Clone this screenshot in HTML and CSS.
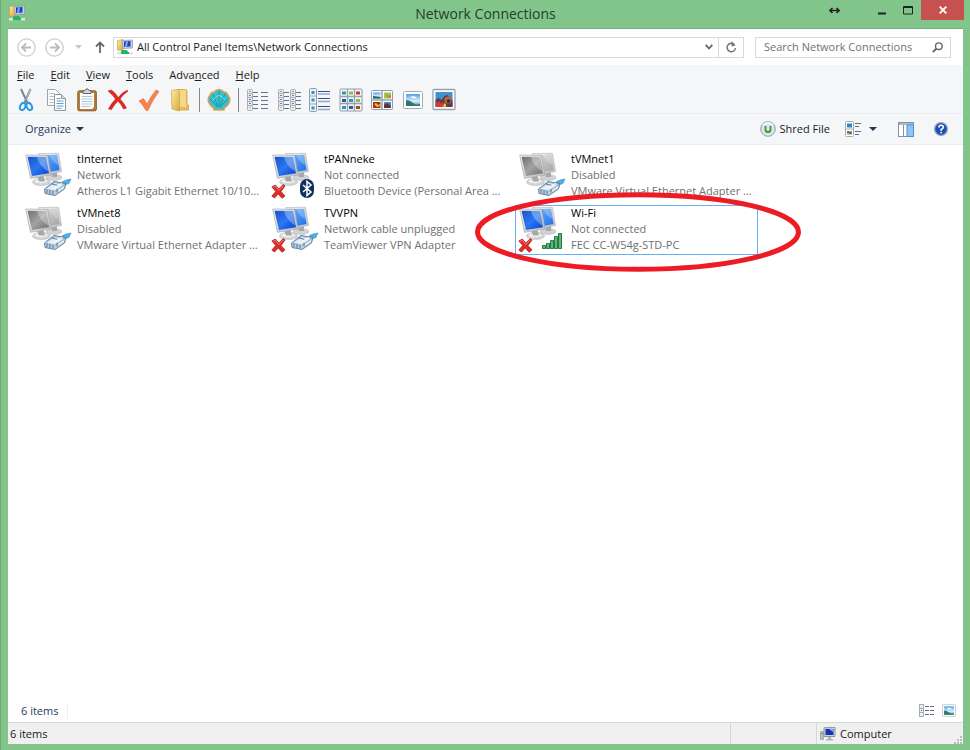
FILE: index.html
```html
<!DOCTYPE html>
<html lang="en">
<head>
<meta charset="utf-8">
<title>Network Connections</title>
<link rel="stylesheet" href="styles.css">
</head>
<body>
<svg class="defs" aria-hidden="true">
  <defs>
    <linearGradient id="blue" x1="0" y1="0" x2="1" y2="1"><stop offset="0" stop-color="#1f50c8"/><stop offset=".5" stop-color="#2a78f2"/><stop offset="1" stop-color="#0c3fd0"/></linearGradient>
    <linearGradient id="blue2" x1="0" y1="0" x2="1" y2="1"><stop offset="0" stop-color="#6fb2f7"/><stop offset="1" stop-color="#1e6ff0"/></linearGradient>
    <linearGradient id="gray" x1="0" y1="0" x2="1" y2="1"><stop offset="0" stop-color="#6f6f6f"/><stop offset=".5" stop-color="#a2a2a2"/><stop offset="1" stop-color="#707070"/></linearGradient>
    <linearGradient id="gray2" x1="0" y1="0" x2="1" y2="1"><stop offset="0" stop-color="#dadada"/><stop offset="1" stop-color="#a4a4a4"/></linearGradient>
    <linearGradient id="frame" x1="0" y1="0" x2="1" y2="1"><stop offset="0" stop-color="#f4f4f4"/><stop offset="1" stop-color="#b9bcbe"/></linearGradient>
    <linearGradient id="gold" x1="0" y1="0" x2="1" y2="1"><stop offset="0" stop-color="#fdeea4"/><stop offset="1" stop-color="#d9a93c"/></linearGradient>
    <linearGradient id="sky" x1="0" y1="0" x2="0" y2="1"><stop offset="0" stop-color="#4f9fe8"/><stop offset=".6" stop-color="#d8f0fa"/><stop offset="1" stop-color="#3c8c88"/></linearGradient>

    <symbol id="screens" viewBox="0 0 48 48">
      <ellipse cx="30" cy="26.500" rx="8" ry="3" fill="#d0d2d3" stroke="#b4b6b8" stroke-width=".5"/>
      <path d="M27 20l6-1v7h-5z" fill="#a6a8aa"/>
      <path d="M14.500 2.500L34.500 2.300 37.500 20.500 22 23.500z" fill="url(#frame)" stroke="#b4b6b8" stroke-width=".6"/>
      <path d="M16.500 4.200L33 4 35.500 19 23 21.500z" fill="var(--back)"/>
      <path d="M25 4.200L33 4 34.500 14Q29 12 25 4.200z" fill="#fff" opacity=".25"/>
      <ellipse cx="17.500" cy="31" rx="9" ry="3.600" fill="#d2d4d5" stroke="#aeb0b2" stroke-width=".5"/>
      <ellipse cx="17" cy="30.200" rx="6.500" ry="2" fill="#f3f3f3"/>
      <path d="M13.500 26l6-1 1.500 5.500h-6z" fill="#a4a8aa"/>
      <path d="M1.700 4L23.500 4.300 27 24 6.500 27.300z" fill="url(#frame)" stroke="#a6a9ab" stroke-width=".7"/>
      <path d="M3.500 5.700L22 6 25 22.300 8 25z" fill="var(--front)"/>
      <path d="M13 5.900L22 6 24.500 20.500Q15 15 13 5.900z" fill="#fff" opacity=".3"/>
    </symbol>
    <symbol id="plug" viewBox="0 0 48 48">
      <path d="M35 34Q38 29 47 28L45 32.500Q41 33 38 37z" fill="#4eb2e8" stroke="#2c87c0" stroke-width=".5"/>
      <path d="M20.500 38L30 30.500 42 32.500 40.500 38 31 44.500 21 42.500z" fill="#bcd0e2" stroke="#57799c" stroke-width=".9"/>
      <path d="M21 38L31 31.500 41 33.500 30.500 40z" fill="#e6eff7" stroke="#7b97b4" stroke-width=".6"/>
      <path d="M23 38.500v3.500M26 39v4M29 40v3.500M28 33l6 1.500M33 38v3.500" stroke="#456b93" stroke-width=".9"/>
      <path d="M30 37l8-5M34 40l6-4" stroke="#fff" stroke-width="1"/>
    </symbol>
    <symbol id="off" viewBox="0 0 48 48">
      <path d="M.8 36l3.500-2 3.500 4 4.500-4.500L14 35l-4 5.500 4 4.500-3 2.300L7.300 43 3.500 47 .8 45l4-4.500z" fill="#e02c28" stroke="#a81515" stroke-width=".7"/>
      <path d="M2.300 36.300l2-1 3.500 4.200L12.300 35" fill="none" stroke="#ff8a80" stroke-width=".8"/>
    </symbol>
    <symbol id="bluetooth" viewBox="0 0 48 48">
      <rect x="29" y="28" width="14" height="19" rx="7" fill="#10315e"/>
      <path d="M32 34l8 7-4 3.500v-14l4 3.500-8 7" fill="none" stroke="#fff" stroke-width="1.500"/>
    </symbol>
    <symbol id="bars" viewBox="0 0 48 48">
      <path d="M24.500 40.500h3v3h-3zM28.500 38.500h3v5h-3zM32.500 35.500h3v8h-3zM36.500 31.500h3v12h-3zM40.500 28.500h3v15h-3z" fill="#62b478" stroke="#237c42"/>
    </symbol>

    <symbol id="app" viewBox="0 0 16 16">
      <path d="M.5 1.500L6 .5v11L.5 11z" fill="url(#gold)" stroke="#c7a244" stroke-width=".7"/>
      <path d="M5 1.500L15.500 1v8L6 9.500z" fill="#c7d0dc" stroke="#8794a6" stroke-width=".7"/>
      <path d="M7 2.500l6.500-.5v5.500L7 8z" fill="#1c3fc4"/>
      <path d="M9 2.500l2-.2-1 5.300-2 .3z" fill="#7fb0ff"/>
      <path d="M5 11h5l1 2h4v2H1v-2h3z" fill="#24b36a"/>
      <path d="M0 13h4v2.500H0zM12 13h4v2.500h-4z" fill="#dbe6e0"/>
    </symbol>
    <symbol id="pic" viewBox="0 0 20 18">
      <rect x=".5" y=".5" width="19" height="17" rx="1" fill="#fff" stroke="#a3adb8"/>
      <rect x="3" y="3" width="14" height="12" fill="url(#sky)"/>
      <path d="M3 9q4 0 7 3t7 1v2H3z" fill="#2f766e"/>
      <path d="M7 6q4-2 7 1-3 1-7-1z" fill="#fff"/>
    </symbol>
    <symbol id="lines" viewBox="0 0 12 22">
      <rect x=".5" y=".5" width="5" height="21" rx="1" fill="#e8edf2" stroke="#a7b1bd"/>
      <path d="M1 4.500h4M1 8.500h4M1 12.500h4M1 16.500h4" stroke="#a7b1bd"/>
      <path d="M2 2.500h2" stroke="#6a9"/><path d="M2 6.500h2M2 14.500h2" stroke="#d55"/><path d="M2 10.500h2" stroke="#48c"/><path d="M2 18.500h2" stroke="#db4"/>
      <path d="M6 3.500h5M6 7.500h5M6 11.500h5M6 15.500h5M6 19.500h5" stroke="#63758a"/>
    </symbol>
  </defs>
</svg>

<div class="window">
  <header class="titlebar">
    <svg class="i16 app-icon"><use href="#app"/></svg>
    <h1>Network Connections</h1>
    <div class="controls">
      <button aria-label="Resize"><svg width="11" height="7" viewBox="0 0 11 7"><path d="M1 3.500h9M3.500 1L1 3.500 3.500 6M7.500 1L10 3.500 7.500 6" fill="none" stroke="#222" stroke-width="1.600"/></svg></button>
      <button class="min" aria-label="Minimize"><svg width="8" height="9" viewBox="0 0 8 9"><path d="M0 7.500h8" stroke="#222" stroke-width="2"/></svg></button>
      <button class="max" aria-label="Maximize"><svg width="10" height="9" viewBox="0 0 10 9"><path d="M.5 .5h9v7.500h-9zM0 1.500h10" fill="none" stroke="#222"/></svg></button>
      <button class="close" aria-label="Close"><svg width="8" height="8" viewBox="0 0 8 8"><path d="M.7 .7l6.600 6.600M7.300 .7L.7 7.300" stroke="#fff" stroke-width="1.800"/></svg></button>
    </div>
  </header>

  <main class="frame">
    <nav class="address-row">
      <button class="circle" aria-label="Back"><svg width="19" height="19" viewBox="0 0 19 19"><circle cx="9.500" cy="9.500" r="8.700" fill="none" stroke="#ccc" stroke-width="1.300"/><path d="M14 9.500H5.500M9 5.500l-4 4 4 4" fill="none" stroke="#bcbcbc" stroke-width="1.800"/></svg></button>
      <button class="circle" aria-label="Forward"><svg width="19" height="19" viewBox="0 0 19 19"><circle cx="9.500" cy="9.500" r="8.700" fill="none" stroke="#ccc" stroke-width="1.300"/><path d="M5 9.500h8.500M10 5.500l4 4-4 4" fill="none" stroke="#bcbcbc" stroke-width="1.800"/></svg></button>
      <button class="recent" aria-label="Recent locations"><svg width="7" height="4" viewBox="0 0 7 4"><path d="M0 0h7L3.500 4z" fill="#c8c8c8"/></svg></button>
      <button class="up" aria-label="Up"><svg width="10" height="12" viewBox="0 0 10 12"><path d="M5 12V1.500M1 5.500l4-4 4 4" fill="none" stroke="#666" stroke-width="1.800"/></svg></button>
      <div class="address">
        <svg class="i16"><use href="#app"/></svg>
        <input aria-label="Address" value="All Control Panel Items\Network Connections">
        <button aria-label="Previous locations"><svg width="8" height="6" viewBox="0 0 8 6"><path d="M.7 .8L4 4.500 7.300 .8" fill="none" stroke="#666" stroke-width="1.800"/></svg></button>
        <button class="refresh" aria-label="Refresh"><svg width="11" height="12" viewBox="0 0 11 12"><path d="M8.500 3.800A4.200 4.200 0 1 0 9.500 7" fill="none" stroke="#777" stroke-width="1.500"/><path d="M5.500 0v5.500L9.500 4.500z" fill="#777"/></svg></button>
      </div>
      <div class="search">
        <input aria-label="Search" placeholder="Search Network Connections">
        <button aria-label="Start search"><svg width="11" height="11" viewBox="0 0 11 11"><circle cx="6.800" cy="4.200" r="3.300" fill="none" stroke="#666" stroke-width="1.400"/><path d="M4.500 6.500L.8 10.200" stroke="#666" stroke-width="1.800"/></svg></button>
      </div>
    </nav>

    <nav class="menu">
      <a href="#"><u>F</u>ile</a><a href="#"><u>E</u>dit</a><a href="#"><u>V</u>iew</a><a href="#"><u>T</u>ools</a><a href="#">Adva<u>n</u>ced</a><a href="#"><u>H</u>elp</a>
    </nav>

    <div class="toolbar">
      <button aria-label="Cut"><svg viewBox="0 0 24 24"><path d="M8 1l6.500 14M17.500 1L11.500 15" stroke="#7c8794" stroke-width="2"/><path d="M17.500 1L13 11.500" stroke="#c6ccd2" stroke-width=".8"/><ellipse cx="9.700" cy="18.500" rx="2.500" ry="3.700" transform="rotate(25 9.700 18.500)" fill="none" stroke="#289ae0" stroke-width="2"/><ellipse cx="16.300" cy="18.500" rx="2.500" ry="3.700" transform="rotate(-25 16.300 18.500)" fill="none" stroke="#289ae0" stroke-width="2"/></svg></button>
      <button aria-label="Copy"><svg viewBox="0 0 24 24"><path d="M3.500 1.500h8l4 4v12h-12z" fill="#fafafa" stroke="#9ea4aa"/><path d="M5.500 5.500h5M5.500 8.500h7M5.500 11.500h5M5.500 14.500h4" stroke="#b7bcc2"/><path d="M10.500 6.500h7l4 4v12h-11z" fill="#fff" stroke="#8e979f"/><path d="M17.500 6.500v4h4" fill="#d9dde1" stroke="#8e979f"/><path d="M12.500 10.500h4M12.500 13h7M12.500 15.500h7M12.500 18h7M12.500 20.300h5" stroke="#5f9fd0"/></svg></button>
      <button aria-label="Paste"><svg viewBox="0 0 24 24"><rect x="2.800" y="2.800" width="18.500" height="20" rx="1.500" fill="#b47c3d" stroke="#8c5926"/><path d="M5 5h14v14l-2 2H5z" fill="#fff"/><path d="M6.500 8.500h11M6.500 11h11M6.500 13.500h11M6.500 16h11M6.500 18.500h9" stroke="#a9c3da"/><path d="M8 2.500h2l1-1.500h2l1 1.500h2v3H8z" fill="#d5d7d9" stroke="#65696d"/></svg></button>
      <button aria-label="Delete"><svg viewBox="0 0 24 24"><path d="M2 3l3.500-1q4 3 7 7.500Q16 4 21.500 2.300l.5.700q-5 3.500-8 8 4 4 6.500 9l-3 1q-2.500-5-5.500-8-4 4-6.500 8.500L2.500 21q3-6 7-10Q6 6 2 3z" fill="#e02820" stroke="#b31813" stroke-width=".5"/></svg></button>
      <button aria-label="Properties"><svg viewBox="0 0 24 24"><path d="M2 13l4.500-2.500 3.500 5.500Q14 8 19 2l3 1.500Q16 11 11 22.500H9Q6 17 2 13z" fill="#f4824a" stroke="#e8703a" stroke-width=".6"/></svg></button>
      <button aria-label="New folder"><svg viewBox="0 0 24 24"><path d="M9 1.500h9l1 1V16l1.500 1v5L9 22z" fill="#e9bd57" stroke="#d09c34" stroke-width=".7"/><path d="M10 2h8v17h-8z" fill="#f4d987"/><path d="M3.500 2.500L9.500 1.500 11.500 3.500V23L4 21z" fill="url(#gold)" stroke="#cda241" stroke-width=".7"/></svg></button>
      <span class="sep"></span>
      <button aria-label="Shell"><svg viewBox="0 0 24 24"><path d="M6.500 20Q2 17 1 12q0-3 2-5 1-3 4-3 2-2.500 5-2.500T17 4q3 0 4 3 2 2 2 5-1 5-5.500 8l-.5 2H7z" fill="#35c2cc" stroke="#f29a49" stroke-width="1.300"/><path d="M11 19L3 11M11 19L6 6M12 19V3M13 19l5-13M13 19l8-8" stroke="#1b93a6" stroke-width=".9"/><path d="M6 12Q12 3 18 12" fill="none" stroke="#78dee0"/></svg></button>
      <span class="sep"></span>
      <button aria-label="List"><svg viewBox="0 0 24 24"><use href="#lines" x="1" y="1" width="12" height="22"/><path d="M15 4.500h7M15 8.500h7M15 12.500h7M15 16.500h7M15 20.500h7" stroke="#63758a"/></svg></button>
      <button aria-label="Columns"><svg viewBox="0 0 24 24"><use href="#lines" x="1" y="1" width="12" height="22"/><use href="#lines" x="13" y="1" width="12" height="22"/></svg></button>
      <button aria-label="Tiles"><svg viewBox="0 0 24 24"><rect x="1.500" y=".5" width="7" height="23" rx="1" fill="#edf1f5" stroke="#8e9cac"/><path d="M2 8h6M2 16h6" stroke="#9eabb9"/><path d="M3.500 3h3v3h-3zM3.500 10.500h3v3h-3zM3.500 18.500h3v3h-3z" fill="#3e93b8"/><path d="M10 3.500h12M10 10.500h12M10 18.500h12" stroke="#41546f"/><path d="M10 6h12M10 13.500h12M10 21.500h12" stroke="#8aa8dc" stroke-width="1.500"/></svg></button>
      <button aria-label="Small icons"><svg viewBox="0 0 24 24"><rect x="1" y="1" width="22" height="22" rx="1" fill="#f4f6f8" stroke="#8e9cac"/><path d="M8.500 1v22M15.500 1v22M1 8.500h22M1 15.500h22" stroke="#97a4b3" stroke-width="1.300"/><path d="M3 3.500h4v3H3zM10 11h4v3h-4zM3 18h4v3H3z" fill="#2f9aa2"/><path d="M10 3.500h4v3h-4zM17 11h4v3h-4z" fill="#8cbf4a"/><path d="M17 3.500h4v3h-4zM17 18h4v3h-4z" fill="#ba3e24"/><path d="M3 11h4v3H3zM10 18h4v3h-4z" fill="#31598e"/></svg></button>
      <button aria-label="Medium icons"><svg viewBox="0 0 24 24"><rect x="1.500" y="2.500" width="21" height="19" rx="1" fill="#fff" stroke="#8e9cac"/><path d="M12 2v20M1 12h22" stroke="#97a4b3" stroke-width="1.500"/><path d="M3 4.500h7.500v6H3z" fill="url(#sky)"/><path d="M3 8l7.500 1v1.500H3z" fill="#216d5b"/><path d="M14 4.500h7v6h-7z" fill="#8fcf55"/><path d="M15 5l4 3 2-3v5h-3z" fill="#e77a2e"/><path d="M3 14h7.500v6H3z" fill="#a33118"/><path d="M4 16l2-1 2 2 2-1v2l-3 1z" fill="#f3bb22"/><path d="M14 14h7v6h-7z" fill="#4d88c8"/><path d="M14 17l3-2 4 3v2h-7z" fill="#63302c"/></svg></button>
      <button aria-label="Large icons"><svg viewBox="0 0 24 24"><use href="#pic" x="2" y="3" width="20" height="18"/></svg></button>
      <button aria-label="Extra large icons"><svg viewBox="0 0 24 24"><rect x="1" y="1.500" width="22" height="20" rx="1" fill="#fff" stroke="#98a3af" stroke-width="1.300"/><path d="M3.500 4h17v15h-17z" fill="#3f91cf"/><path d="M3.500 12l3-2 3 2 3-4 3-1 3 3 2 2v7h-17z" fill="#663744"/><circle cx="16" cy="12" r="3.500" fill="#b96a36"/><circle cx="16.500" cy="13" r="1.800" fill="#252c45"/><path d="M4 13l2 2 1-3 2 4 2-3v6H4z" fill="#cf3d37"/><path d="M12 15l2 1v3h-3z" fill="#ecc04a"/></svg></button>
    </div>

    <div class="commands">
      <button class="organize">Organize <svg width="8" height="4" viewBox="0 0 8 4"><path d="M0 0h8L4 4z" fill="#1e395b"/></svg></button>
      <button class="shred"><svg width="16" height="16" viewBox="0 0 16 16"><circle cx="8" cy="8" r="7.300" fill="#dce5ec" stroke="#8ea0b1"/><path d="M3 4q5-4 10 0" fill="none" stroke="#fff" stroke-width="1.500"/><path d="M5.500 5V9q0 2 2.500 2t2.500-2V5" fill="none" stroke="#3a9a27" stroke-width="1.800"/></svg>Shred File</button>
      <button class="views" aria-label="Change view"><svg width="16" height="16" viewBox="0 0 16 16"><rect x=".5" y=".5" width="8" height="15" rx="1" fill="#fff" stroke="#a3adb8"/><path d="M1 8h7" stroke="#a3adb8"/><path d="M2 2.500h5v4H2z" fill="#3589b5"/><path d="M2 10h5v3.500H2z" fill="#7eb84f"/><path d="M2 10h2v2H2z" fill="#d6482c"/><path d="M4.500 11h2v2h-2z" fill="#365fc8"/><path d="M10 2.500h6M10 5.500h4M10 10.500h6M10 13.500h4" stroke="#5a6e88"/></svg></button>
      <button class="view-more" aria-label="More views"><svg width="8" height="4" viewBox="0 0 8 4"><path d="M0 0h8L4 4z" fill="#1e395b"/></svg></button>
      <button class="pane" aria-label="Preview pane"><svg width="16" height="15" viewBox="0 0 16 15"><rect x=".5" y=".5" width="15" height="14" fill="#fff" stroke="#8693a1"/><path d="M1 2h14" stroke="#aeb8c2" stroke-width="2"/><path d="M5.500 3v11" stroke="#8693a1"/><path d="M9 3h6.500v11.500H9z" fill="#8fc5f8" stroke="#4c94d8"/></svg></button>
      <button class="help" aria-label="Help"><svg width="14" height="14" viewBox="0 0 14 14"><circle cx="7" cy="7" r="6.300" fill="#1c50b8" stroke="#8a9bb8" stroke-width="1.300"/><path d="M4.800 5.500Q5 3.300 7.200 3.300T9.300 5.300Q9.300 6.300 7.200 7.500V8.700M7.200 9.700v1.600" fill="none" stroke="#fff" stroke-width="1.600"/></svg></button>
    </div>

    <section class="items" aria-label="Connections">
      <button class="item">
        <svg class="net" viewBox="0 0 48 48"><use href="#screens"/><use href="#plug"/></svg>
        <span class="text"><b>tInternet</b><span>Network</span><span>Atheros L1 Gigabit Ethernet 10/10...</span></span>
      </button>
      <button class="item">
        <svg class="net" viewBox="0 0 48 48"><use href="#screens"/><use href="#bluetooth"/><use href="#off"/></svg>
        <span class="text"><b>tPANneke</b><span>Not connected</span><span>Bluetooth Device (Personal Area ...</span></span>
      </button>
      <button class="item disabled">
        <svg class="net" viewBox="0 0 48 48"><use href="#screens"/><use href="#plug"/></svg>
        <span class="text"><b>tVMnet1</b><span>Disabled</span><span>VMware Virtual Ethernet Adapter ...</span></span>
      </button>
      <button class="item disabled">
        <svg class="net" viewBox="0 0 48 48"><use href="#screens"/><use href="#plug"/></svg>
        <span class="text"><b>tVMnet8</b><span>Disabled</span><span>VMware Virtual Ethernet Adapter ...</span></span>
      </button>
      <button class="item">
        <svg class="net" viewBox="0 0 48 48"><use href="#screens"/><use href="#plug"/><use href="#off"/></svg>
        <span class="text"><b>TVVPN</b><span>Network cable unplugged</span><span>TeamViewer VPN Adapter</span></span>
      </button>
      <button class="item selected">
        <svg class="net" viewBox="0 0 48 48"><use href="#screens"/><use href="#bars"/><use href="#off"/></svg>
        <span class="text"><b>Wi-Fi</b><span>Not connected</span><span>FEC CC-W54g-STD-PC</span></span>
        <svg class="ring" viewBox="0 0 326 80"><ellipse cx="163" cy="40" rx="160.500" ry="37.300" fill="none" stroke="#ed1c24" stroke-width="5"/></svg>
      </button>
    </section>

    <div class="details">
      <span class="count">6 items</span>
      <button aria-label="Details view"><svg width="16" height="13" viewBox="0 0 16 13"><rect x=".5" y=".5" width="4" height="12" fill="#edf1f5" stroke="#a3adb8"/><path d="M1 4.500h3M1 8.500h3" stroke="#a3adb8"/><path d="M2 6.500h1" stroke="#d33"/><path d="M6 2.500h4M11 2.500h4M6 6.500h4M11 6.500h4M6 10.500h4M11 10.500h4" stroke="#5e7088"/></svg></button>
      <button aria-label="Thumbnail view"><svg width="14" height="13" viewBox="0 0 20 18"><use href="#pic"/></svg></button>
    </div>

    <footer class="status">
      <span class="total">6 items</span>
      <span class="blank"></span>
      <span class="place"><svg width="16" height="14" viewBox="0 0 16 14"><path d="M.5 4.500h3v8h-3z" fill="#b9bdc2" stroke="#aaa"/><path d="M1 6.500h2" stroke="#2fae3b"/><path d="M4 .8l11-.3v9H4z" fill="#d0d3d8" stroke="#8d949d"/><path d="M5.500 2h8v6h-8z" fill="#1730b8"/><path d="M9 2h4.500v3.500z" fill="#78a9ff"/><path d="M8 10h3v2h2v1.500H6V12h2z" fill="#aeb3b9"/></svg>Computer</span>
      <svg class="grip" width="8" height="8" viewBox="0 0 8 8"><path d="M6 0h2v2H6zM3 3h2v2H3zM6 3h2v2H6zM0 6h2v2H0zM3 6h2v2H3zM6 6h2v2H6z" fill="#bbb"/></svg>
    </footer>
  </main>
</div>
</body>
</html>
```

FILE: styles.css
```css
* {
  box-sizing: border-box;
}

body {
  margin: 0;
  font: 11px/16px "Open Sans", "Noto Sans", sans-serif;
  color: #1a1a1a;
}

button,
input {
  margin: 0;
  padding: 0;
  border: 0;
  background: none;
  font: inherit;
  color: inherit;
}

button {
  display: flex;
  align-items: center;
  justify-content: center;
}

svg {
  display: block;
  flex: none;
}

.defs {
  position: absolute;
  width: 0;
  height: 0;
}

.i16 {
  width: 16px;
  height: 16px;
}

.window {
  display: flex;
  flex-direction: column;
  min-height: 100vh;
  padding: 0 7px 6px;
  background: #82c58b;
  border-left: 1px solid #6ca775;
}

.titlebar {
  display: grid;
  grid-template-columns: 1fr auto 1fr;
  height: 29px;
  border-bottom: 1px solid #6fb078;
}

.app-icon {
  margin: 5px 0 0 1px;
}

.titlebar h1 {
  margin: 0;
  font-size: 14px;
  line-height: 28px;
  font-weight: 400;
  color: #24402a;
}

.controls {
  display: flex;
  justify-content: flex-end;
  align-items: flex-start;
  margin-right: -1px;
}

.controls button {
  height: 20px;
  width: 26px;
}

.controls .min {
  margin-left: 22px;
}

.controls .close {
  width: 43px;
  background: #c75050;
}

.frame {
  display: flex;
  flex-direction: column;
  flex: 1;
  background: #fff;
}

.address-row {
  display: flex;
  align-items: center;
  height: 36px;
  padding: 0 12px 0 9px;
}

.circle {
  width: 19px;
  margin-right: 9px;
}

.recent {
  width: 10px;
}

.up {
  width: 20px;
  margin: 0 3px 0 7px;
}

.address,
.search {
  display: flex;
  align-items: center;
  height: 21px;
  border: 1px solid #d9d9d9;
}

.address {
  flex: 1;
  padding-left: 3px;
  margin-right: 11px;
}

.address input {
  flex: 1;
  min-width: 0;
  padding-left: 4px;
}

.address button {
  width: 18px;
  height: 19px;
}

.address .refresh {
  width: 25px;
  border-left: 1px solid #d9d9d9;
}

.search {
  width: 196px;
}

.search input {
  flex: 1;
  min-width: 0;
  padding-left: 8px;
}

.search input::placeholder {
  color: #707070;
  opacity: 1;
}

.search button {
  width: 26px;
}

.menu {
  display: flex;
  gap: 16px;
  height: 21px;
  padding: 2px 9px 0;
  background: #f5f6f8;
}

.menu a {
  color: #1a1a1a;
  text-decoration: none;
}

.toolbar {
  display: flex;
  align-items: center;
  gap: 7px;
  height: 28px;
  padding: 0 5px;
  background: #f5f6f8;
  border-bottom: 1px solid #e9ebee;
}

.toolbar button,
.toolbar button svg {
  width: 24px;
  height: 24px;
}

.sep {
  width: 1px;
  height: 24px;
  background: #858585;
}

.commands {
  display: flex;
  align-items: center;
  height: 31px;
  padding: 0 15px 0 17px;
  background: #f5f6f8;
  border-bottom: 1px solid #e9ebee;
}

.organize {
  gap: 5px;
  margin-right: auto;
  color: #1e395b;
}

.shred {
  gap: 4px;
}

.views {
  margin-left: 15px;
}

.view-more {
  margin-left: 8px;
}

.pane {
  margin-left: 21px;
}

.help {
  margin-left: 20px;
}

.items {
  display: grid;
  grid-template-columns: repeat(auto-fill, 243px);
  grid-auto-rows: 50px;
  gap: 4px;
  flex: 1;
  align-content: start;
  padding: 6px 100px 6px 13px;
}

.item {
  position: relative;
  align-items: flex-start;
  justify-content: flex-start;
  gap: 5px;
  padding-left: 3px;
  text-align: left;
  white-space: nowrap;
  --front: url(#blue);
  --back: url(#blue2);
}

.disabled {
  --front: url(#gray);
  --back: url(#gray2);
}

.selected {
  outline: 1px solid #66b0f0;
  outline-offset: -1px;
}

.net {
  width: 48px;
  height: 48px;
}

.text {
  display: flex;
  flex-direction: column;
  color: #707070;
}

.text b {
  font-weight: 400;
  color: #000;
}

.ring {
  position: absolute;
  left: -40px;
  top: -13px;
  width: 326px;
  height: 80px;
}

.details {
  display: flex;
  align-items: center;
  gap: 7px;
  height: 23px;
  padding: 0 7px 0 13px;
}

.count {
  margin-right: auto;
  padding-right: 9px;
  border-right: 1px solid #eee;
  color: #1e395b;
}

.status {
  display: flex;
  align-items: center;
  height: 22px;
  background: #f0f0f0;
  border-top: 1px solid #d7d7d7;
}

.total {
  flex: 1;
  padding-left: 2px;
}

.blank,
.place {
  display: flex;
  align-items: center;
  height: 21px;
  border-left: 1px solid #d7d7d7;
}

.blank {
  width: 86px;
}

.place {
  gap: 4px;
  width: 138px;
  padding-left: 3px;
}

.grip {
  align-self: flex-end;
  margin-right: 1px;
}
```
